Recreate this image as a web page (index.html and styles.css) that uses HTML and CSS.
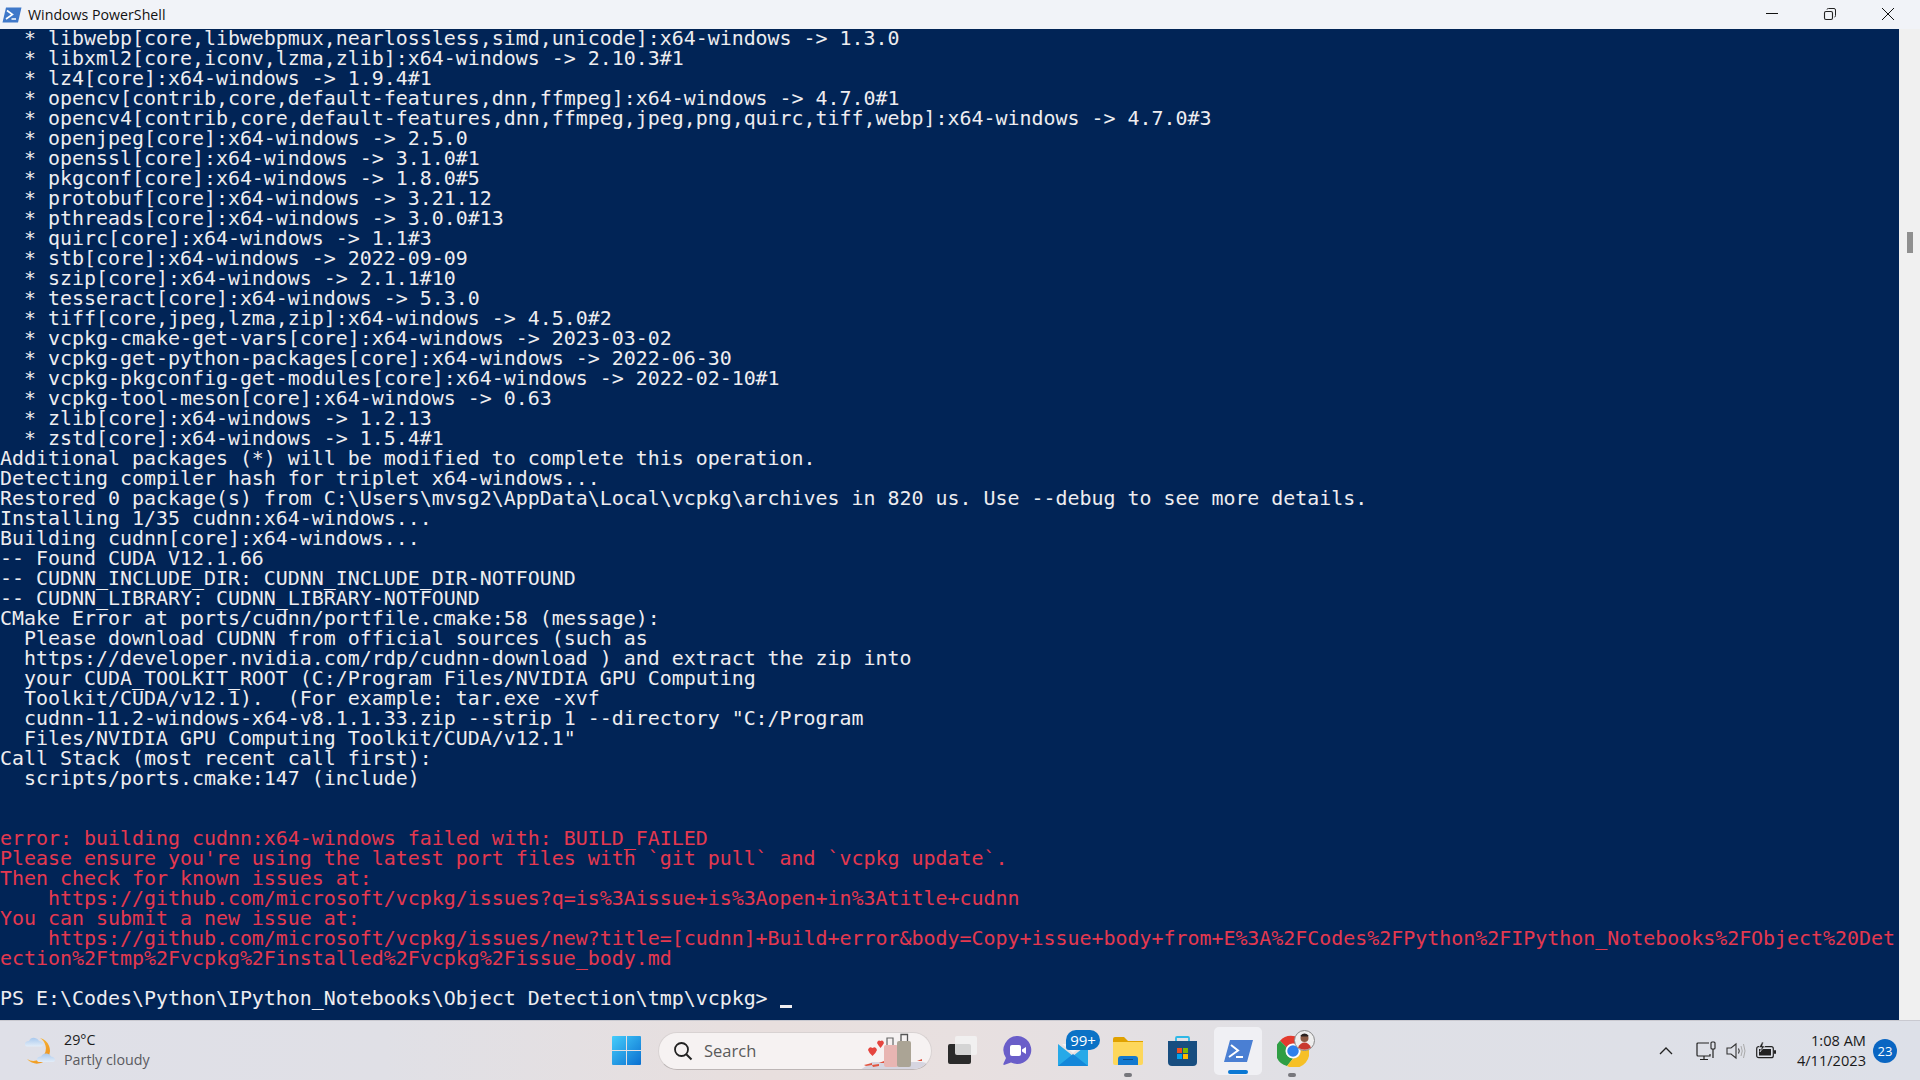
FILE: index.html
```html
<!DOCTYPE html>
<html lang="en">
<head>
<meta charset="utf-8">
<title>Windows PowerShell</title>
<link rel="stylesheet" href="styles.css">
</head>
<body>
<div class="window">
  <header class="titlebar">
    <div class="title-left">
      <svg class="ps-title" viewBox="0 0 20 16" width="20" height="16"><path d="M4 0.5H19.5L16 15.5H0.5Z" fill="#3f78c9"/><path d="M5 3.5L10.5 7.5L4 12" fill="none" stroke="#fff" stroke-width="1.6"/><path d="M9.5 12H14" stroke="#fff" stroke-width="1.5"/></svg>
      <span class="title-text">Windows PowerShell</span>
    </div>
    <div class="win-controls">
      <svg class="ctl" viewBox="0 0 58 29" width="58" height="29"><path d="M23 13.5H35" stroke="#111" stroke-width="1"/></svg>
      <svg class="ctl" viewBox="0 0 58 29" width="58" height="29"><rect x="23.5" y="11.5" width="8" height="8" rx="1.5" fill="none" stroke="#222" stroke-width="1.1"/><path d="M26 9.5Q26 8.5 27.5 8.5H33Q34.500 8.500 34.500 10V15.500Q34.500 17 33.500 17" fill="none" stroke="#222" stroke-width="1"/></svg>
      <svg class="ctl" viewBox="0 0 58 29" width="58" height="29"><path d="M23 8L35 20M35 8L23 20" stroke="#111" stroke-width="1"/></svg>
    </div>
  </header>
  <main class="console">
<pre class="terminal">  * libwebp[core,libwebpmux,nearlossless,simd,unicode]:x64-windows -&gt; 1.3.0
  * libxml2[core,iconv,lzma,zlib]:x64-windows -&gt; 2.10.3#1
  * lz4[core]:x64-windows -&gt; 1.9.4#1
  * opencv[contrib,core,default-features,dnn,ffmpeg]:x64-windows -&gt; 4.7.0#1
  * opencv4[contrib,core,default-features,dnn,ffmpeg,jpeg,png,quirc,tiff,webp]:x64-windows -&gt; 4.7.0#3
  * openjpeg[core]:x64-windows -&gt; 2.5.0
  * openssl[core]:x64-windows -&gt; 3.1.0#1
  * pkgconf[core]:x64-windows -&gt; 1.8.0#5
  * protobuf[core]:x64-windows -&gt; 3.21.12
  * pthreads[core]:x64-windows -&gt; 3.0.0#13
  * quirc[core]:x64-windows -&gt; 1.1#3
  * stb[core]:x64-windows -&gt; 2022-09-09
  * szip[core]:x64-windows -&gt; 2.1.1#10
  * tesseract[core]:x64-windows -&gt; 5.3.0
  * tiff[core,jpeg,lzma,zip]:x64-windows -&gt; 4.5.0#2
  * vcpkg-cmake-get-vars[core]:x64-windows -&gt; 2023-03-02
  * vcpkg-get-python-packages[core]:x64-windows -&gt; 2022-06-30
  * vcpkg-pkgconfig-get-modules[core]:x64-windows -&gt; 2022-02-10#1
  * vcpkg-tool-meson[core]:x64-windows -&gt; 0.63
  * zlib[core]:x64-windows -&gt; 1.2.13
  * zstd[core]:x64-windows -&gt; 1.5.4#1
Additional packages (*) will be modified to complete this operation.
Detecting compiler hash for triplet x64-windows...
Restored 0 package(s) from C:\Users\mvsg2\AppData\Local\vcpkg\archives in 820 us. Use --debug to see more details.
Installing 1/35 cudnn:x64-windows...
Building cudnn[core]:x64-windows...
-- Found CUDA V12.1.66
-- CUDNN_INCLUDE_DIR: CUDNN_INCLUDE_DIR-NOTFOUND
-- CUDNN_LIBRARY: CUDNN_LIBRARY-NOTFOUND
CMake Error at ports/cudnn/portfile.cmake:58 (message):
  Please download CUDNN from official sources (such as
  https://developer.nvidia.com/rdp/cudnn-download ) and extract the zip into
  your CUDA_TOOLKIT_ROOT (C:/Program Files/NVIDIA GPU Computing
  Toolkit/CUDA/v12.1).  (For example: tar.exe -xvf
  cudnn-11.2-windows-x64-v8.1.1.33.zip --strip 1 --directory "C:/Program
  Files/NVIDIA GPU Computing Toolkit/CUDA/v12.1"
Call Stack (most recent call first):
  scripts/ports.cmake:147 (include)


<span class="err">error: building cudnn:x64-windows failed with: BUILD_FAILED
Please ensure you're using the latest port files with `git pull` and `vcpkg update`.
Then check for known issues at:
    https://github.com/microsoft/vcpkg/issues?q=is%3Aissue+is%3Aopen+in%3Atitle+cudnn
You can submit a new issue at:
    https://github.com/microsoft/vcpkg/issues/new?title=[cudnn]+Build+error&amp;body=Copy+issue+body+from+E%3A%2FCodes%2FPython%2FIPython_Notebooks%2FObject%20Det
ection%2Ftmp%2Fvcpkg%2Finstalled%2Fvcpkg%2Fissue_body.md</span>

PS E:\Codes\Python\IPython_Notebooks\Object Detection\tmp\vcpkg&gt; <span class="cursor"></span></pre>
    <div class="scrollbar"><div class="thumb"></div></div>
  </main>
  <footer class="taskbar">
    <div class="weather">
      <svg class="weather-icon" viewBox="0 0 32 30" width="32" height="30">
        <defs>
          <linearGradient id="moon" x1="0" y1="0" x2="1" y2="1"><stop offset="0" stop-color="#fbc83c"/><stop offset="1" stop-color="#ec8a1c"/></linearGradient>
          <linearGradient id="cloud" x1="0" y1="0" x2="0" y2="1"><stop offset="0" stop-color="#a9c9ee"/><stop offset="1" stop-color="#e3edf8"/></linearGradient>
        </defs>
        <path d="M16 3A13 13 0 1 1 3 24A12 12 0 0 0 16 3Z" fill="url(#moon)"/>
        <path d="M3 11.500Q0.500 11 1 8.500Q1.500 6 5 6Q7 2 11 3Q14 3.500 15 6Q19 6.500 19 9.500Q19 11.500 16 11.500Z" fill="url(#cloud)"/>
        <path d="M15 27Q12.500 26.500 13 24Q13.500 21.500 17 21.500Q19 18 23 18.500Q26 19 27 21.500Q31 22 31 25Q31 27 28 27Z" fill="url(#cloud)"/>
      </svg>
      <div class="weather-text">
        <div class="temp">29°C</div>
        <div class="cond">Partly cloudy</div>
      </div>
    </div>
    <div class="center">
      <svg class="start" viewBox="0 0 29 29" width="29" height="29">
        <defs><linearGradient id="wg" x1="0" y1="0" x2="1" y2="1"><stop offset="0" stop-color="#45cdfb"/><stop offset="1" stop-color="#0a6fd0"/></linearGradient></defs>
        <path d="M1 0H14V14H0V1Q0 0 1 0ZM15 0H28Q29 0 29 1V14H15ZM0 15H14V29H1Q0 29 0 28ZM15 15H29V28Q29 29 28 29H15Z" fill="url(#wg)"/>
      </svg>
      <div class="search">
        <svg viewBox="0 0 20 20" width="20" height="20"><circle cx="8.500" cy="8.500" r="6.500" fill="none" stroke="#222" stroke-width="1.800"/><path d="M13 13L18.500 18.500" stroke="#222" stroke-width="2"/></svg>
        <span class="search-label">Search</span>
        <svg class="search-art" viewBox="0 0 71 38" width="71" height="38">
          <path d="M0 37L12 29H62L71 31L64 37Z" fill="#d6d5e0"/>
          <path d="M27 14V5H33V14" stroke="#666" stroke-width="1.200" fill="none"/>
          <rect x="24" y="12" width="14" height="22" rx="2" fill="#e8b5b2"/>
          <path d="M41 11V1.500H47.500V11" stroke="#555" stroke-width="1.300" fill="none"/>
          <rect x="37" y="8" width="14" height="26" rx="2" fill="#aba495"/>
          <path d="M8 17Q9 13 12.500 15Q16 13 17 17Q16 20 12.500 23Q9 20 8 17ZM17 10Q18 6.500 20.500 8Q23 6.500 24 10Q23 12 20.500 15Q18 12 17 10Z" fill="#e5453f"/>
          <path d="M4 32L12 30V32L6 33ZM12 32L19 31V33L13 34ZM19 30L24 28V30ZM57 28L62 26V28Z" fill="#e2543f"/>
        </svg>
      </div>
      <svg class="tb-icon" viewBox="0 0 29 29" width="29" height="29">
        <rect x="0" y="8" width="23" height="20" rx="2" fill="#2b2b2b"/>
        <rect x="7" y="0" width="22" height="19" rx="2" fill="#f2f2f2" opacity=".85"/>
      </svg>
      <svg class="tb-icon chat" viewBox="0 0 29 29" width="29" height="29">
        <path d="M15 0A14 14 0 1 1 8 26.500L1 29Q0 29 .5 27.500L3 22A14 14 0 0 1 15 0Z" fill="#6a5ec9"/>
        <rect x="7" y="9" width="11" height="11" rx="2" fill="#fff"/>
        <path d="M19 13.500L23 11V18L19 15.500Z" fill="#fff"/>
      </svg>
      <div class="mail">
        <svg viewBox="0 0 30 22" width="30" height="22">
          <path d="M0 0L15 12L30 0V22H0Z" fill="#27a9e8"/>
          <path d="M0 22L15 10L30 22Z" fill="#1487d9"/>
          <path d="M4 0H26L15 9Z" fill="#f3f3f3"/>
        </svg>
        <span class="badge-99">99+</span>
      </div>
      <div class="app running">
        <svg viewBox="0 0 30 28" width="30" height="28">
          <path d="M0 2Q0 0 2 0H11L15 4H30V12H0Z" fill="#e0a100"/>
          <path d="M0 5H30V26Q30 28 28 28H2Q0 28 0 26Z" fill="#fdd75b"/>
          <path d="M5 22Q5 19 8 19H22Q25 19 25 22V28H5Z" fill="#1279cf"/>
          <path d="M10 22.500H20" stroke="#0b4f8c" stroke-width="1"/>
        </svg>
      </div>
      <svg class="tb-icon store" viewBox="0 0 29 30" width="29" height="30">
        <path d="M8 5V2Q8 1 9 1H20Q21 1 21 2V5" fill="none" stroke="#2fb8e6" stroke-width="1.800"/>
        <path d="M0 5H29V26Q29 30 25 30H4Q0 30 0 26Z" fill="#184e80"/>
        <rect x="9" y="12" width="5" height="5" fill="#f25022"/>
        <rect x="15" y="12" width="5" height="5" fill="#7fba00"/>
        <rect x="9" y="18" width="5" height="5" fill="#00a4ef"/>
        <rect x="15" y="18" width="5" height="5" fill="#ffb900"/>
      </svg>
      <div class="ps-tile">
        <svg viewBox="0 0 29 22" width="29" height="22">
          <path d="M6 0H29L23 22H0Z" fill="#4a7fd3"/>
          <path d="M7 5L14 10.500L5 17" fill="none" stroke="#fff" stroke-width="2"/>
          <path d="M12 17H19" stroke="#fff" stroke-width="2"/>
        </svg>
        <span class="active-bar"></span>
      </div>
      <div class="app running chrome">
        <svg viewBox="0 0 32 32" width="32" height="32">
          <path d="M16 1A15 15 0 0 1 29 8.500H16A7.500 7.500 0 0 0 9.500 12.300L3 5.700A15 15 0 0 1 16 1Z" fill="#e33b2e"/>
          <path d="M3 5.700L9.500 12.300A7.500 7.500 0 0 0 16 23.500L10 31A15 15 0 0 1 3 5.700Z" fill="#2f9e44"/>
          <path d="M29 8.500A15 15 0 0 1 10 31L16 23.500A7.500 7.500 0 0 0 22.500 12L29 8.500Z" fill="#f6c026"/>
          <circle cx="16" cy="16" r="6.500" fill="#2f80ed" stroke="#fff" stroke-width="1.500"/>
        </svg>
        <svg class="avatar" viewBox="0 0 21 21" width="21" height="21">
          <circle cx="10.500" cy="10.500" r="10" fill="#eee" stroke="#888" stroke-width="1"/>
          <circle cx="10.500" cy="8" r="4" fill="#8d5a44"/>
          <path d="M6.500 5.500Q10.500 1.500 14.500 5.500L14 6.500H7Z" fill="#2a2220"/>
          <path d="M4 17.500Q6.500 12.500 10.500 12.500Q14.500 12.500 17 17.500Q10.500 22 4 17.500Z" fill="#c9392f"/>
        </svg>
      </div>
    </div>
    <div class="tray">
      <svg class="chev" viewBox="0 0 14 8" width="14" height="8"><path d="M1 7L7 1L13 7" fill="none" stroke="#222" stroke-width="1.300"/></svg>
      <svg class="net" viewBox="0 0 20 20" width="20" height="20">
        <path d="M13 2H2Q1 2 1 3V14Q1 15 2 15H14V13" fill="none" stroke="#222" stroke-width="1.200"/>
        <path d="M8 15V18M4 18.500H12" stroke="#222" stroke-width="1.200"/>
        <rect x="15" y="1" width="4" height="7" rx="1" fill="none" stroke="#222" stroke-width="1.100"/>
        <path d="M17 8V17" stroke="#222" stroke-width="1.200"/>
      </svg>
      <svg class="vol" viewBox="0 0 20 20" width="20" height="20">
        <path d="M1 7H5L10 3V17L5 13H1Z" fill="none" stroke="#333" stroke-width="1.100"/>
        <path d="M12.500 7.500Q14 10 12.500 12.500" fill="none" stroke="#333" stroke-width="1.100"/>
        <path d="M15 5Q17.500 10 15 15M17.500 3Q20.500 10 17.500 17" fill="none" stroke="#aaa" stroke-width="1"/>
      </svg>
      <svg class="batt" viewBox="0 0 20 18" width="20" height="18">
        <rect x="0.700" y="4.700" width="16.600" height="11" rx="2" fill="none" stroke="#222" stroke-width="1.200"/>
        <rect x="3" y="7" width="12" height="6.500" fill="#222"/>
        <rect x="18" y="8" width="2" height="4" rx="1" fill="#222"/>
        <path d="M6 0L3 5.500H5.500L4 10L9 4H6.500L7.500 0Z" fill="#222" stroke="#e0e2ea" stroke-width=".6"/>
      </svg>
      <div class="clock">
        <div>1:08 AM</div>
        <div>4/11/2023</div>
      </div>
      <span class="notif">23</span>
    </div>
  </footer>
</div>
</body>
</html>
```
FILE: styles.css
```css
* { box-sizing: border-box; }
html, body { margin: 0; padding: 0; height: 100%; overflow: hidden; }
.window {
  width: 1920px;
  height: 1080px;
  display: flex;
  flex-direction: column;
  font-family: "Open Sans", "Noto Sans", sans-serif;
}
.titlebar {
  height: 29px;
  flex: none;
  background: #f1f3f8;
  display: flex;
  align-items: center;
  justify-content: space-between;
}
.title-left { display: flex; align-items: center; gap: 6px; padding-left: 2px; }
.title-text { font-size: 14.2px; color: #111; font-family: "Open Sans", sans-serif; }
.win-controls { display: flex; padding-right: 3px; }
.ctl { display: block; }
.console { flex: 1; display: flex; min-height: 0; background: #012456; }
.terminal {
  flex: 1;
  min-width: 0;
  margin: 0;
  font-family: "DejaVu Sans Mono", "Liberation Mono", monospace;
  font-size: 19.93px;
  line-height: 20px;
  color: #eeedf0;
}
.err { color: #e5384f; }
.cursor { display: inline-block; width: 12px; height: 3px; background: #eeedf0; vertical-align: -3px; }
.scrollbar { width: 21px; flex: none; background: #f0f0f0; padding: 203px 7px 0 8px; }
.thumb { height: 21px; background: #8f8f8f; }
.taskbar {
  height: 60px;
  flex: none;
  border-top: 1px solid #c9c9d0;
  background: linear-gradient(90deg, #dfe0e8 0%, #e0e0e6 20%, #e8dfde 40%, #e8e0e0 50%, #dfe0e6 70%, #dde0e8 100%);
  display: flex;
  align-items: center;
  position: relative;
}
.weather { display: flex; align-items: center; gap: 8px; padding-left: 24px; padding-bottom: 2px; width: 612px; flex: none; }
.weather-text { font-size: 14.3px; line-height: 20px; font-family: "Open Sans", sans-serif; }
.temp { color: #1c1c1c; }
.cond { color: #5b5b5f; }
.center { display: flex; align-items: center; width: 700px; flex: none; }
.start { margin-right: 17px; flex: none; }
.search {
  width: 274px;
  height: 38px;
  flex: none;
  border-radius: 19px;
  background: #f6f2f2;
  border: 1px solid #d8d2d2;
  border-bottom-color: #bdb6b6;
  display: flex;
  align-items: center;
  padding-left: 14px;
  gap: 11px;
  position: relative;
  overflow: hidden;
  margin-right: 16px;
}
.search-label { font-size: 16.5px; color: #5a5a5a; font-family: "Open Sans", sans-serif; }
.search-art { position: absolute; right: 0; top: 0; }
.tb-icon { flex: none; display: block; }
.chat { margin: 0 26px; }
.mail { position: relative; width: 42px; height: 30px; flex: none; display: flex; align-items: flex-end; }
.badge-99 {
  position: absolute;
  left: 8px;
  top: -6px;
  width: 34px;
  height: 20px;
  border-radius: 10px 10px 10px 3px;
  background: #0a72c6;
  color: #fff;
  font-size: 15px;
  line-height: 20px;
  text-align: center;
}
.app { position: relative; flex: none; height: 48px; display: flex; align-items: center; justify-content: center; }
.app.running { margin-left: 13px; width: 30px; }
.running::after {
  content: "";
  position: absolute;
  bottom: -2px;
  left: 11px;
  width: 8px;
  height: 4px;
  border-radius: 2px;
  background: #77777c;
}
.store { margin-left: 25px; }
.ps-tile {
  width: 48px;
  height: 48px;
  margin-left: 17px;
  flex: none;
  background: #f0f0f4;
  border-radius: 5px;
  display: flex;
  align-items: center;
  justify-content: center;
  position: relative;
}
.active-bar {
  position: absolute;
  left: 14px;
  bottom: 1px;
  width: 20px;
  height: 4px;
  border-radius: 2px;
  background: #0a78d4;
}
.app.chrome { margin-left: 15px; width: 32px; }
.avatar { position: absolute; right: -6px; top: 3px; }
.tray { flex: 1; display: flex; align-items: center; padding-left: 347px; }
.chev { margin-right: 23px; flex: none; }
.net, .vol, .batt { flex: none; }
.vol { margin-left: 10px; }
.batt { margin-left: 10px; }
.clock {
  font-size: 14.6px;
  line-height: 20px;
  color: #1a1a1a;
  text-align: right;
  margin-left: 10px;
  padding-bottom: 2px;
  width: 80px;
  flex: none;
  font-family: "Open Sans", sans-serif;
}
.notif {
  width: 24px;
  height: 24px;
  margin-left: 7px;
  border-radius: 50%;
  background: #0a66c2;
  color: #fff;
  font-size: 13px;
  line-height: 24px;
  text-align: center;
  flex: none;
}
```
